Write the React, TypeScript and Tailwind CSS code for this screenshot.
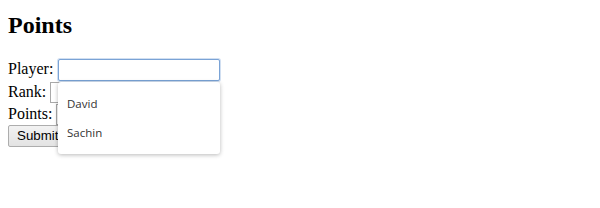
import React from "react";

export default function App() {
  return (
    <div className="relative min-h-[208px] w-[600px] bg-white px-2 pt-2 font-['Liberation_Serif',serif] text-base text-black">
      <h2 className="mt-[3px] mb-[20px] text-[24px] font-bold leading-[28px]">Points</h2>
      <div className="flex h-[22px] items-center">
        <span className="leading-[18px] -mt-[2px]">Player:</span>
        <div className="ml-[5px] h-[22px] w-[162px] rounded-[2px] border border-[#7aa3d6] bg-white shadow-[0_0_0_1px_rgba(122,163,214,0.35)]" />
      </div>
      <div className="flex h-[22px] items-center">
        <span className="leading-[18px]">Rank:</span>
        <div className="ml-[4px] h-[21px] w-[162px] border border-[#a9a9a9] bg-white" />
      </div>
      <div className="flex h-[22px] items-center">
        <span className="leading-[18px]">Points:</span>
        <div className="ml-[4px] h-[21px] w-[162px] border border-[#a9a9a9] bg-white" />
      </div>
      <div className="flex h-[22px] items-center">
        <button className="h-[22px] rounded-[2px] border border-[#adadad] bg-gradient-to-b from-[#f2f2f2] to-[#e3e3e3] px-[8px] font-['Liberation_Sans',sans-serif] text-[13.33px] leading-[16px] text-black">
          Submit
        </button>
      </div>
      <div className="absolute left-[58px] top-[82px] w-[162px] rounded-[3px] bg-white py-[7px] shadow-[0_1px_4px_rgba(0,0,0,0.28)] font-['Open_Sans',sans-serif] text-[11.5px] text-[#333]">
        <div className="flex h-[29px] items-center px-[9px]">David</div>
        <div className="flex h-[29px] items-center px-[9px]">Sachin</div>
      </div>
    </div>
  );
}
